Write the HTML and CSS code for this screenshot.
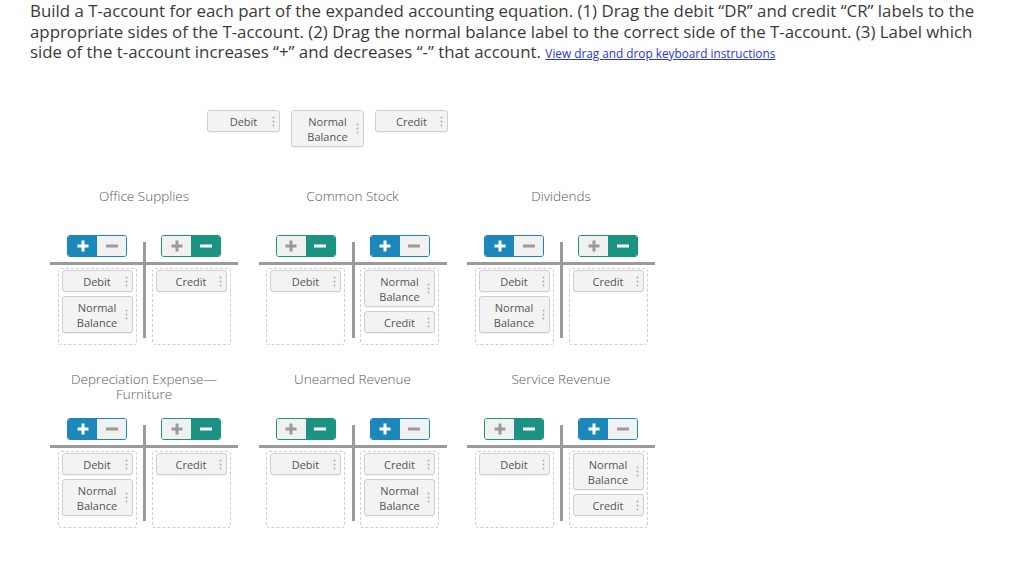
FILE: index.html
```html
<!DOCTYPE html>
<html>
<head>
<meta charset="utf-8">
<link rel="stylesheet" href="styles.css">
</head>
<body>
<div class="page">
  <p class="prompt">Build a T-account for each part of the expanded accounting equation. (1) Drag the debit “DR” and credit “CR” labels to the appropriate sides of the T-account. (2) Drag the normal balance label to the correct side of the T-account. (3) Label which side of the t-account increases “+” and decreases “-” that account. <a href="#" class="kbd-link">View drag and drop keyboard instructions</a></p>

  <div class="bank">
    <div class="chip chip-wide"><span class="chip-text">Debit</span><svg class="dots" viewBox="0 0 3 11"><circle cx="1.5" cy="1.5" r="0.9"/><circle cx="1.5" cy="5.5" r="0.9"/><circle cx="1.5" cy="9.5" r="0.9"/></svg></div>
    <div class="chip chip-wide"><span class="chip-text">Normal<br>Balance</span><svg class="dots" viewBox="0 0 3 11"><circle cx="1.5" cy="1.5" r="0.9"/><circle cx="1.5" cy="5.5" r="0.9"/><circle cx="1.5" cy="9.5" r="0.9"/></svg></div>
    <div class="chip chip-wide"><span class="chip-text">Credit</span><svg class="dots" viewBox="0 0 3 11"><circle cx="1.5" cy="1.5" r="0.9"/><circle cx="1.5" cy="5.5" r="0.9"/><circle cx="1.5" cy="9.5" r="0.9"/></svg></div>
  </div>

  <div class="accounts" id="accounts"></div>
</div>
<script src="app.js"></script>
</body>
</html>
```
FILE: app.js
```js
const DOTS = '<svg class="dots" viewBox="0 0 3 11"><circle cx="1.5" cy="1.5" r="0.9"/><circle cx="1.5" cy="5.5" r="0.9"/><circle cx="1.5" cy="9.5" r="0.9"/></svg>';
const PLUS = '<svg class="sym" viewBox="0 0 12 12"><path d="M6 0.5v11M0.5 6h11"/></svg>';
const MINUS = '<svg class="sym" viewBox="0 0 12 12"><path d="M0 6h12"/></svg>';
const labels = { D: 'Debit', C: 'Credit', N: 'Normal<br>Balance' };

const accounts = [
  { title: 'Office Supplies', l: 'plus', r: 'minus', lz: ['D', 'N'], rz: ['C'] },
  { title: 'Common Stock', l: 'minus', r: 'plus', lz: ['D'], rz: ['N', 'C'] },
  { title: 'Dividends', l: 'plus', r: 'minus', lz: ['D', 'N'], rz: ['C'] },
  { title: 'Depreciation Expense—Furniture', l: 'plus', r: 'minus', lz: ['D', 'N'], rz: ['C'] },
  { title: 'Unearned Revenue', l: 'minus', r: 'plus', lz: ['D'], rz: ['C', 'N'] },
  { title: 'Service Revenue', l: 'minus', r: 'plus', lz: ['D'], rz: ['N', 'C'] }
];

function toggle(mode) {
  if (mode === 'plus') {
    return '<div class="toggle toggle-plus"><span class="half on">' + PLUS + '</span><span class="half off">' + MINUS + '</span></div>';
  }
  return '<div class="toggle toggle-minus"><span class="half off">' + PLUS + '</span><span class="half on">' + MINUS + '</span></div>';
}
function zone(items) {
  return '<div class="zone">' + items.map(k => '<div class="chip"><span class="chip-text">' + labels[k] + '</span>' + DOTS + '</div>').join('') + '</div>';
}

document.getElementById('accounts').innerHTML = accounts.map(a =>
  '<div class="account">' +
    '<div class="title">' + a.title + '</div>' +
    '<div class="t">' +
      '<div class="toggles"><div class="cell">' + toggle(a.l) + '</div><div class="cell">' + toggle(a.r) + '</div></div>' +
      '<div class="hline"></div>' +
      '<div class="zones"><div class="cell">' + zone(a.lz) + '</div><div class="cell">' + zone(a.rz) + '</div></div>' +
    '</div>' +
  '</div>'
).join('');
```
FILE: styles.css
```css
* { box-sizing: border-box; }
html, body { margin: 0; padding: 0; background: #fff; }
body { font-family: "Open Sans", "Liberation Sans", sans-serif; color: #333; }

.page { padding: 0 0 0 30px; }

.prompt {
  margin: 0;
  padding-top: 1px;
  width: 955px;
  font-size: 16.85px;
  line-height: 20.5px;
  color: #3a3a3a;
}
.kbd-link {
  font-size: 11.8px;
  line-height: 14px;
  color: #2536e8;
  text-decoration: underline;
}

.bank {
  display: flex;
  align-items: flex-start;
  gap: 11px;
  margin-top: 47.5px;
  padding-left: 177px;
}

.chip {
  position: relative;
  width: 71px;
  padding: 2.5px 8px;
  background: #f3f3f3;
  border: 1px solid #cfcfcf;
  border-radius: 3px;
  box-shadow: 0 1px 1px rgba(0,0,0,0.06);
  font-size: 11px;
  line-height: 15px;
  color: #555;
  text-align: center;
}
.chip-wide { width: 73px; }
.chip-text { display: block; }
.dots {
  position: absolute;
  right: 4px;
  top: 50%;
  width: 3px;
  height: 11px;
  margin-top: -5.5px;
  fill: #a8a8a8;
}

.accounts {
  display: grid;
  grid-template-columns: repeat(3, 188px);
  column-gap: 20.5px;
  row-gap: 26.5px;
  margin-top: 41.5px;
  margin-left: 20px;
}

.title {
  height: 46.5px;
  font-size: 13.5px;
  line-height: 15px;
  font-weight: 300;
  color: #5a5a5a;
  text-align: center;
  padding: 0 4px;
}

.t { position: relative; }
.t::after {
  content: "";
  position: absolute;
  left: 93px;
  top: 7px;
  width: 3px;
  height: 96px;
  background: #9b9b9b;
}

.toggles, .zones {
  display: grid;
  grid-template-columns: 94px 94px;
}
.cell { display: flex; justify-content: center; }

.toggle {
  display: flex;
  width: 60px;
  height: 22px;
  border-radius: 3px;
  border: 1px solid;
  overflow: hidden;
}
.toggle-plus { border-color: #1b87bb; }
.toggle-minus { border-color: #1a9383; }
.half {
  flex: 1;
  display: flex;
  align-items: center;
  justify-content: center;
  background: #f1f1f1;
}
.toggle-plus .on { background: #1b87bb; }
.toggle-minus .on { background: #1a9383; }
.sym {
  width: 12px;
  height: 12px;
  fill: none;
  stroke: #9a9a9a;
  stroke-width: 3;
}
.on .sym { stroke: #fff; }

.hline {
  height: 3px;
  margin-top: 5px;
  background: #9b9b9b;
}

.zones { margin-top: 3px; }
.zone {
  display: flex;
  flex-direction: column;
  gap: 4px;
  width: 79px;
  height: 77px;
  padding: 1px 3px;
  border: 1px dashed #cfcfcf;
  border-radius: 3px;
}
```
